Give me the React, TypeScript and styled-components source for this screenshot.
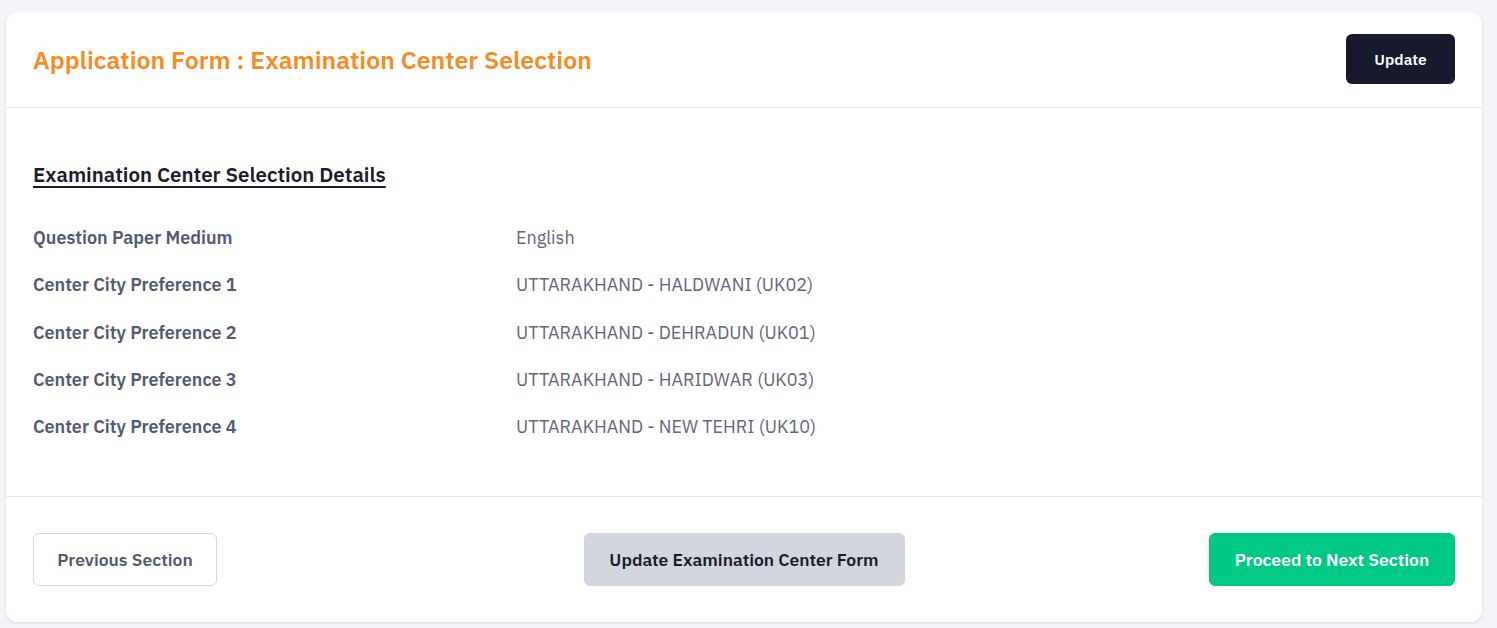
import React from "react";
import styled, { createGlobalStyle } from "styled-components";

const Global = createGlobalStyle`
  html, body { margin: 0; padding: 0; background: #f3f4f9; }
  body { font-family: "IBM Plex Sans", Roboto, "Noto Sans", sans-serif; }
  * { box-sizing: border-box; }
`;

const Page = styled.div`
  padding: 12px 15px 6px 6px;
`;

const Card = styled.div`
  background: #ffffff;
  border-radius: 12px;
  box-shadow: 0 1px 3px rgba(30, 35, 60, 0.12);
  display: flex;
  flex-direction: column;
`;

const Header = styled.div`
  height: 96px;
  padding: 0 27px 1px;
  display: flex;
  align-items: center;
  justify-content: space-between;
  border-bottom: 1px solid #e3e5ea;
`;

const Title = styled.h1`
  margin: 0;
  font-size: 24.9px;
  font-weight: 600;
  color: #f68b1f;
`;

const DarkButton = styled.button`
  height: 50px;
  width: 109px;
  border: none;
  border-radius: 6px;
  background: #171a2d;
  color: #ffffff;
  font-family: inherit;
  font-size: 15.5px;
  font-weight: 600;
`;

const Body = styled.div`
  padding: 53px 27px 55px;
  border-bottom: 1px solid #e3e5ea;
  display: flex;
  flex-direction: column;
`;

const SectionHeading = styled.h2`
  margin: 0 0 35px;
  align-self: flex-start;
  font-size: 20.5px;
  line-height: 28px;
  font-weight: 600;
  color: #191c2c;
  text-decoration: underline;
  text-underline-offset: 4px;
  text-decoration-thickness: 2px;
`;

const Rows = styled.div`
  display: flex;
  flex-direction: column;
  gap: 19.25px;
`;

const Row = styled.div`
  display: grid;
  grid-template-columns: 483px 1fr;
  font-size: 18px;
  line-height: 28px;
`;

const Label = styled.div`
  font-weight: 600;
  color: #505a72;
`;

const Value = styled.div`
  font-weight: 400;
  color: #5f677b;
`;

const Footer = styled.div`
  padding: 36px 27px;
  display: grid;
  grid-template-columns: 1fr auto 1fr;
  align-items: center;
`;

const ActionButton = styled.button<{
  $variant: "outline" | "muted" | "success";
  $w: number;
  $align: "start" | "center" | "end";
}>`
  justify-self: ${(p) => p.$align};
  height: 53px;
  width: ${(p) => p.$w}px;
  border-radius: 6px;
  font-family: inherit;
  font-size: 17.5px;
  font-weight: 600;
  border: 1px solid
    ${(p) => (p.$variant === "outline" ? "#d6d8de" : p.$variant === "muted" ? "#d1d6df" : "#00c985")};
  background: ${(p) => (p.$variant === "outline" ? "#ffffff" : p.$variant === "muted" ? "#d1d6df" : "#00c985")};
  color: ${(p) => (p.$variant === "outline" ? "#525a6e" : p.$variant === "muted" ? "#1a1c28" : "#ffffff")};
`;

const rows = [
  ["Question Paper Medium", "English"],
  ["Center City Preference 1", "UTTARAKHAND - HALDWANI (UK02)"],
  ["Center City Preference 2", "UTTARAKHAND - DEHRADUN (UK01)"],
  ["Center City Preference 3", "UTTARAKHAND - HARIDWAR (UK03)"],
  ["Center City Preference 4", "UTTARAKHAND - NEW TEHRI (UK10)"],
];

export default function App() {
  return (
    <>
      <Global />
      <Page>
        <Card>
          <Header>
            <Title>Application Form : Examination Center Selection</Title>
            <DarkButton>Update</DarkButton>
          </Header>
          <Body>
            <SectionHeading>Examination Center Selection Details</SectionHeading>
            <Rows>
              {rows.map(([l, v]) => (
                <Row key={l}>
                  <Label>{l}</Label>
                  <Value>{v}</Value>
                </Row>
              ))}
            </Rows>
          </Body>
          <Footer>
            <ActionButton $variant="outline" $w={184} $align="start">
              Previous Section
            </ActionButton>
            <ActionButton $variant="muted" $w={321} $align="center">
              Update Examination Center Form
            </ActionButton>
            <ActionButton $variant="success" $w={246} $align="end">
              Proceed to Next Section
            </ActionButton>
          </Footer>
        </Card>
      </Page>
    </>
  );
}
